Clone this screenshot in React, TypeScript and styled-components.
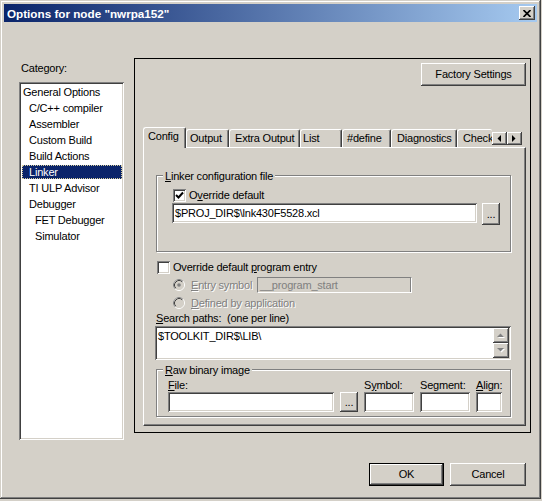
import styled, { createGlobalStyle, css } from "styled-components";

const GlobalStyle = createGlobalStyle`
  * { box-sizing: border-box; }
  html, body { margin: 0; padding: 0; background: #d4d0c8; }
  body {
    font-family: "Liberation Sans", Arial, sans-serif;
    font-size: 11px;
    line-height: 13px;
    letter-spacing: -0.2px;
    color: #000;
  }
`;

// classic 3d edges
const raised = css`
  background: #d4d0c8;
  box-shadow: inset -1px -1px 0 #404040, inset 1px 1px 0 #fff, inset -2px -2px 0 #808080;
`;

const sunken = css`
  box-shadow: inset 1px 1px 0 #808080, inset -1px -1px 0 #fff, inset 2px 2px 0 #404040,
    inset -2px -2px 0 #d4d0c8;
`;

const Window = styled.div`
  width: 541px;
  height: 499px;
  padding: 4px;
  display: flex;
  flex-direction: column;
  background: #d4d0c8;
  box-shadow: inset -1px -1px 0 #404040, inset 1px 1px 0 #d4d0c8, inset -2px -2px 0 #808080,
    inset 2px 2px 0 #fff;
`;

const TitleBar = styled.div`
  height: 18px;
  display: flex;
  align-items: center;
  justify-content: space-between;
  padding: 0 2px 0 3px;
  background: linear-gradient(to right, #0a246a, #a6caf0);
  color: #fff;
  font-weight: bold;
  font-size: 11.7px;
  letter-spacing: 0;
`;

const CloseButton = styled.span`
  ${raised};
  width: 16px;
  height: 14px;
  display: flex;
  align-items: center;
  justify-content: center;
`;

const Body = styled.div`
  flex: 1;
  display: flex;
  flex-direction: column;
  padding: 36px 6px 0 15px;
`;

const MainRow = styled.div`
  display: flex;
  align-items: flex-start;
  gap: 10px;
`;

const Sidebar = styled.div`
  width: 105px;
  display: flex;
  flex-direction: column;
`;

const CategoryLabel = styled.div`
  margin: 4px 0 0 2px;
`;

const ListBox = styled.div`
  ${sunken};
  background: #fff;
  height: 358px;
  margin-top: 7px;
  padding: 2px;
`;

const Item = styled.div`
  height: 16px;
  padding: 1px 0 1px 1px;
`;

const ItemLabel = styled.div<{ $level: number; $selected?: boolean }>`
  height: 14px;
  line-height: 14px;
  padding-left: ${(p) => 1 + p.$level * 6}px;
  white-space: nowrap;
  ${(p) =>
    p.$selected &&
    css`
      background: #0a246a;
      color: #fff;
      outline: 1px dotted #d8cf9c;
      outline-offset: -1px;
    `}
`;

const Panel = styled.div`
  width: 397px;
  height: 375px;
  border: 1px solid #000;
  display: flex;
  flex-direction: column;
  padding: 4px 4px 0 8px;
`;

const Button = styled.div<{ $w: number; $h?: number; $default?: boolean }>`
  ${raised};
  width: ${(p) => p.$w}px;
  height: ${(p) => p.$h ?? 23}px;
  border: ${(p) => (p.$default ? "1px solid #000" : "none")};
  display: flex;
  align-items: center;
  justify-content: center;
  flex-shrink: 0;
`;

const FactoryButton = styled(Button)`
  align-self: flex-end;
`;

const TabStrip = styled.div`
  height: 20px;
  margin-top: 41px;
  padding-right: 4px;
  display: flex;
  align-items: flex-end;
`;

const Tab = styled.div<{ $w: number; $pad: number; $selected?: boolean; $clipped?: boolean }>`
  position: relative;
  z-index: ${(p) => (p.$selected ? 1 : 0)};
  flex-shrink: 0;
  width: ${(p) => p.$w}px;
  height: ${(p) => (p.$selected ? 21 : 18)}px;
  margin-bottom: ${(p) => (p.$selected ? -1 : 0)}px;
  padding: 2px 0 0 ${(p) => p.$pad - 1}px;
  background: #d4d0c8;
  border-top: 1px solid #fff;
  border-left: 1px solid #fff;
  border-right: ${(p) => (p.$clipped ? "none" : "1px solid #404040")};
  box-shadow: ${(p) => (p.$clipped ? "none" : "inset -1px 0 0 #808080")};
  border-radius: 3px 2px 0 0;
  white-space: nowrap;
  overflow: hidden;
`;

const Spin = styled.div`
  display: flex;
  margin-bottom: 2px;
`;

const SpinButton = styled.span`
  ${raised};
  width: 15px;
  height: 13px;
  display: flex;
  align-items: center;
  justify-content: center;
`;

const Page = styled.div`
  height: 279px;
  border: 1px solid #404040;
  border-top-color: #fff;
  border-left-color: #fff;
  box-shadow: inset -1px -1px 0 #808080;
  padding: 0 14px 0 12px;
  display: flex;
  flex-direction: column;
`;

const GroupBox = styled.div<{ $h: number; $mt: number }>`
  position: relative;
  height: ${(p) => p.$h}px;
  margin-top: ${(p) => p.$mt}px;
  border: 1px solid #808080;
  box-shadow: inset 1px 1px 0 #fff, 1px 1px 0 #fff;
`;

const Legend = styled.span`
  position: absolute;
  top: -6px;
  left: 6px;
  padding: 0 2px;
  background: #d4d0c8;
`;

const ConfigFileBody = styled.div`
  padding: 12px 0 0 15px;
`;

const CheckRow = styled.div<{ $indent: number; $mt: number }>`
  display: flex;
  align-items: center;
  gap: 3px;
  height: 14px;
  margin: ${(p) => p.$mt}px 0 0 ${(p) => p.$indent}px;
  white-space: nowrap;
`;

const RadioRow = styled.div<{ $h: number; $mt: number }>`
  display: flex;
  align-items: center;
  height: ${(p) => p.$h}px;
  margin: ${(p) => p.$mt}px 0 0 17px;
  white-space: nowrap;
`;

const RadioLabel = styled.span<{ $w?: number }>`
  margin-left: 6px;
  width: ${(p) => (p.$w ? `${p.$w}px` : "auto")};
  color: #808080;
  text-shadow: 1px 1px 0 #fff;
`;

const Box = styled.span`
  ${sunken};
  background: #fff;
  width: 13px;
  height: 13px;
  display: flex;
  align-items: center;
  justify-content: center;
  flex-shrink: 0;
`;

const InputRow = styled.div`
  display: flex;
  align-items: flex-start;
  gap: 5px;
  margin-top: 1px;
`;

const Field = styled.div<{ $w?: number; $h?: number }>`
  ${sunken};
  background: #fff;
  width: ${(p) => (p.$w ? `${p.$w}px` : "auto")};
  height: ${(p) => p.$h ?? 20}px;
  padding: 0 3px;
  display: flex;
  align-items: center;
  white-space: nowrap;
  overflow: hidden;
`;

const DisabledField = styled.div`
  width: 155px;
  height: 16px;
  border: 1px solid #fff;
  border-top-color: #808080;
  border-left-color: #808080;
  box-shadow: inset -1px 0 0 #808080;
  padding-left: 2px;
  display: flex;
  align-items: center;
  color: #808080;
`;

const SearchLabel = styled.div`
  margin-top: 2px;
  white-space: pre;
`;

const PathsBox = styled.div`
  ${sunken};
  background: #fff;
  height: 34px;
  margin: 1px 0 0 -1px;
  padding: 2px;
  display: flex;
`;

const PathsText = styled.div`
  flex: 1;
  padding: 2px 0 0 1px;
`;

const ScrollBar = styled.div`
  width: 16px;
  display: flex;
  flex-direction: column;
`;

const ScrollButton = styled.span`
  ${raised};
  height: 15px;
  display: flex;
  align-items: center;
  justify-content: center;
`;

const RawGrid = styled.div`
  display: grid;
  grid-template-columns: 166px 18px 50px 50px 26px;
  column-gap: 6px;
  padding: 9px 0 0 11px;
`;

const Key = styled.span`
  text-decoration: underline;
`;

const Footer = styled.div`
  display: flex;
  justify-content: flex-end;
  gap: 6px;
  margin-top: 23px;
  padding-right: 5px;
`;

const categories = [
  { label: "General Options", level: 0 },
  { label: "C/C++ compiler", level: 1 },
  { label: "Assembler", level: 1 },
  { label: "Custom Build", level: 1 },
  { label: "Build Actions", level: 1 },
  { label: "Linker", level: 1, selected: true },
  { label: "TI ULP Advisor", level: 1 },
  { label: "Debugger", level: 1 },
  { label: "FET Debugger", level: 2 },
  { label: "Simulator", level: 2 },
];

const tabs = [
  { label: "Config", w: 43, pad: 5, selected: true },
  { label: "Output", w: 43, pad: 4 },
  { label: "Extra Output", w: 71, pad: 6 },
  { label: "List", w: 42, pad: 3 },
  { label: "#define", w: 49, pad: 5 },
  { label: "Diagnostics", w: 66, pad: 6 },
  { label: "Check", w: 35, pad: 6, clipped: true },
];

const CheckMark = () => (
  <svg width="9" height="9" viewBox="0 0 9 9">
    <polyline points="1,4 3.5,6.5 8,1.5" fill="none" stroke="#000" strokeWidth="2" />
  </svg>
);

const Radio = ({ checked }: { checked?: boolean }) => (
  <svg width="12" height="12" viewBox="0 0 12 12">
    <circle cx="6" cy="6" r="5.5" fill="none" stroke="#fff" />
    <path d="M2.11 9.89 A5.5 5.5 0 0 1 9.89 2.11" fill="none" stroke="#808080" />
    <circle cx="6" cy="6" r="4.5" fill="#d4d0c8" stroke="#d4d0c8" />
    <path d="M2.82 9.18 A4.5 4.5 0 0 1 9.18 2.82" fill="none" stroke="#404040" />
    {checked && <circle cx="6" cy="6" r="1.8" fill="#808080" />}
  </svg>
);

const Arrow = ({ dir, color = "#000" }: { dir: "left" | "right" | "up" | "down"; color?: string }) => {
  const pts = {
    left: "4,0 4,7 0.5,3.5",
    right: "0,0 0,7 3.5,3.5",
    up: "0,4 7,4 3.5,0.5",
    down: "0,0 7,0 3.5,3.5",
  }[dir];
  const horiz = dir === "left" || dir === "right";
  return (
    <svg width={horiz ? 5 : 8} height={horiz ? 8 : 5} viewBox={horiz ? "0 0 5 8" : "0 0 8 5"}>
      {color !== "#000" && <polygon points={pts} fill="#fff" transform="translate(1 1)" />}
      <polygon points={pts} fill={color} />
    </svg>
  );
};

function App() {
  return (
    <>
      <GlobalStyle />
      <Window>
        <TitleBar>
          <span>{'Options for node "nwrpa152"'}</span>
          <CloseButton>
            <svg width="8" height="7" viewBox="0 0 8 7">
              <path d="M0.5 0 L7.5 7 M7.5 0 L0.5 7" stroke="#000" strokeWidth="1.7" />
            </svg>
          </CloseButton>
        </TitleBar>
        <Body>
          <MainRow>
            <Sidebar>
              <CategoryLabel>Category:</CategoryLabel>
              <ListBox>
                {categories.map((c) => (
                  <Item key={c.label}>
                    <ItemLabel $level={c.level} $selected={c.selected}>
                      {c.label}
                    </ItemLabel>
                  </Item>
                ))}
              </ListBox>
            </Sidebar>
            <Panel>
              <FactoryButton $w={105}>Factory Settings</FactoryButton>
              <TabStrip>
                {tabs.map((t) => (
                  <Tab key={t.label} $w={t.w} $pad={t.pad} $selected={t.selected} $clipped={t.clipped}>
                    {t.label}
                  </Tab>
                ))}
                <Spin>
                  <SpinButton>
                    <Arrow dir="left" />
                  </SpinButton>
                  <SpinButton>
                    <Arrow dir="right" />
                  </SpinButton>
                </Spin>
              </TabStrip>
              <Page>
                <GroupBox $h={77} $mt={27}>
                  <Legend>
                    <Key>L</Key>inker configuration file
                  </Legend>
                  <ConfigFileBody>
                    <CheckRow $indent={1} $mt={0}>
                      <Box>
                        <CheckMark />
                      </Box>
                      <span>
                        O<Key>v</Key>erride default
                      </span>
                    </CheckRow>
                    <InputRow>
                      <Field $w={305}>$PROJ_DIR$\lnk430F5528.xcl</Field>
                      <Button $w={18} $h={22}>
                        ...
                      </Button>
                    </InputRow>
                  </ConfigFileBody>
                </GroupBox>

                <CheckRow $indent={1} $mt={8}>
                  <Box />
                  <span>
                    Override default <Key>p</Key>rogram entry
                  </span>
                </CheckRow>
                <RadioRow $h={16} $mt={3}>
                  <Radio checked />
                  <RadioLabel $w={66}>
                    <Key>E</Key>ntry symbol
                  </RadioLabel>
                  <DisabledField>__program_start</DisabledField>
                </RadioRow>
                <RadioRow $h={14} $mt={3}>
                  <Radio />
                  <RadioLabel>
                    <Key>D</Key>efined by application
                  </RadioLabel>
                </RadioRow>

                <SearchLabel>
                  <Key>S</Key>earch paths:  (one per line)
                </SearchLabel>
                <PathsBox>
                  <PathsText>$TOOLKIT_DIR$\LIB\</PathsText>
                  <ScrollBar>
                    <ScrollButton>
                      <Arrow dir="up" color="#808080" />
                    </ScrollButton>
                    <ScrollButton>
                      <Arrow dir="down" color="#808080" />
                    </ScrollButton>
                  </ScrollBar>
                </PathsBox>

                <GroupBox $h={48} $mt={9}>
                  <Legend>
                    <Key>R</Key>aw binary image
                  </Legend>
                  <RawGrid>
                    <span>
                      <Key>F</Key>ile:
                    </span>
                    <span />
                    <span>
                      S<Key>y</Key>mbol:
                    </span>
                    <span>
                      Se<Key>g</Key>ment:
                    </span>
                    <span>
                      <Key>A</Key>lign:
                    </span>
                    <Field />
                    <Button $w={18} $h={20}>
                      ...
                    </Button>
                    <Field />
                    <Field />
                    <Field />
                  </RawGrid>
                </GroupBox>
              </Page>
            </Panel>
          </MainRow>
          <Footer>
            <Button $w={75} $default>
              OK
            </Button>
            <Button $w={76}>Cancel</Button>
          </Footer>
        </Body>
      </Window>
    </>
  );
}

export default App;
